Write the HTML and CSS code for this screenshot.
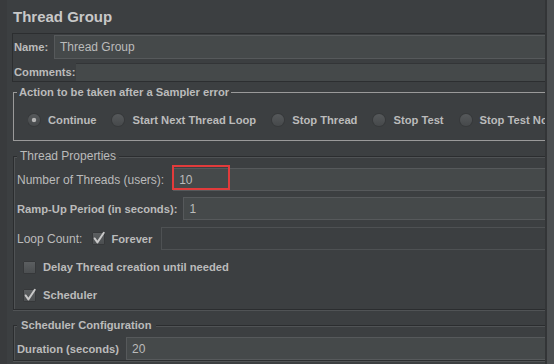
FILE: index.html
```html
<!DOCTYPE html>
<html>
<head>
<meta charset="utf-8">
<title>Thread Group</title>
<link rel="stylesheet" href="styles.css">
</head>
<body>
<div class="frame">
  <div class="edge"></div>
  <main class="content">
    <h1 class="title">Thread Group</h1>

    <div class="name-panel">
      <div class="row name-row">
        <span class="lbl b name-lbl">Name:</span>
        <div class="tf">Thread Group</div>
      </div>
      <div class="row comments-row">
        <span class="lbl b">Comments:</span>
        <div class="tf comments"></div>
      </div>
    </div>

    <fieldset class="group action">
      <legend class="b">Action to be taken after a Sampler error</legend>
      <div class="radios">
        <span class="opt"><span class="radio on"></span><span class="b">Continue</span></span>
        <span class="opt"><span class="radio"></span><span class="b">Start Next Thread Loop</span></span>
        <span class="opt"><span class="radio"></span><span class="b">Stop Thread</span></span>
        <span class="opt"><span class="radio"></span><span class="b">Stop Test</span></span>
        <span class="opt"><span class="radio"></span><span class="b">Stop Test Now</span></span>
      </div>
    </fieldset>

    <fieldset class="group etched props">
      <legend>Thread Properties</legend>
      <div class="row fr fr1">
        <span class="lbl">Number of Threads (users):</span>
        <div class="tf">10<span class="mark"></span></div>
      </div>
      <div class="row fr fr2">
        <span class="lbl b">Ramp-Up Period (in seconds):</span>
        <div class="tf">1</div>
      </div>
      <div class="row fr fr3">
        <span class="lbl">Loop Count:</span>
        <span class="check loop-check">
          <span class="cb"><svg width="13" height="13" viewBox="0 0 13 13"><path d="M2.6 6.4 L5.4 10.4 L11.8 0.8" fill="none" stroke="#c9c9c9" stroke-width="1.9" stroke-linecap="round" stroke-linejoin="round"/></svg></span>
          <span class="b">Forever</span>
        </span>
        <div class="tf disabled"></div>
      </div>
      <div class="row cr cr1">
        <span class="check">
          <span class="cb"></span>
          <span class="b">Delay Thread creation until needed</span>
        </span>
      </div>
      <div class="row cr cr2">
        <span class="check">
          <span class="cb"><svg width="13" height="13" viewBox="0 0 13 13"><path d="M2.6 6.4 L5.4 10.4 L11.8 0.8" fill="none" stroke="#c9c9c9" stroke-width="1.9" stroke-linecap="round" stroke-linejoin="round"/></svg></span>
          <span class="b">Scheduler</span>
        </span>
      </div>
    </fieldset>

    <fieldset class="group etched sched">
      <legend class="b">Scheduler Configuration</legend>
      <div class="row fr dur">
        <span class="lbl b">Duration (seconds)</span>
        <div class="tf">20</div>
      </div>
    </fieldset>
  </main>
  <div class="gutter"></div>
  <div class="scrollbar"></div>
</div>
</body>
</html>
```

FILE: styles.css
```css
* { box-sizing: border-box; }

html, body {
  margin: 0;
  height: 100%;
  overflow: hidden;
}

body {
  background: #3c3f41;
  font-family: "Liberation Sans", Arial, sans-serif;
  font-size: 12px;
  color: #bbbbbb;
}

.frame {
  display: flex;
  height: 364px;
}

.edge {
  flex: none;
  width: 7px;
  background: #393b3d;
}

.content {
  flex: 1;
  min-width: 0;
  overflow: hidden;
}

.gutter {
  flex: none;
  width: 2px;
  background: #333537;
}

.scrollbar {
  flex: none;
  width: 7px;
  background: #4c4f51;
}

.title {
  margin: 0;
  height: 33px;
  line-height: 33px;
  padding-left: 6px;
  font-size: 15px;
  font-weight: bold;
  color: #c8c8c8;
}

.b {
  font-weight: bold;
  font-size: 11.2px;
}

.lbl { white-space: nowrap; flex: none; }

.row {
  display: flex;
  align-items: center;
}

/* Name / comments panel */
.name-panel {
  margin-left: 5px;
  border: 1px solid #2c2e30;
  border-right: 0;
  padding-left: 1px;
}

.name-row {
  margin-top: 1px;
  height: 24px;
}

.name-lbl { width: 40px; }

.comments-row {
  margin-top: 4px;
  height: 18px;
}

/* text fields */
.tf {
  flex: 1;
  min-width: 0;
  height: 100%;
  background: #45494a;
  border: 1px solid #56595b;
  border-right: 0;
  padding-left: 5px;
  display: flex;
  align-items: center;
  position: relative;
  white-space: nowrap;
}

.tf.comments {
  border: 0;
  border-top: 1px solid #333537;
}

.tf.disabled {
  background: transparent;
  border-color: #4e5153;
}

/* annotation box */
.mark {
  position: absolute;
  left: -2px;
  top: -4px;
  width: 58px;
  height: 25px;
  border: 2px solid #e23b3b;
}

/* titled groups */
.group {
  margin: 0 0 0 6px;
  min-width: 0;
  border: 1px solid;
  border-right: 0;
}

.group > legend {
  line-height: 14px;
  padding: 0 3px;
  margin-left: 0;
  white-space: nowrap;
  background: #3c3f41;
}

.group.action {
  margin-top: 3px;
  border-color: #9a9a9a;
  padding: 11px 0 10px 14px;
}

.group.action > legend {
  padding: 0 2px;
  margin-left: -11px;
}

.radios {
  height: 20px;
  display: flex;
  align-items: center;
  gap: 16px;
  white-space: nowrap;
  overflow: hidden;
}

.opt {
  display: flex;
  align-items: center;
  gap: 8px;
  flex: none;
}

.radio {
  flex: none;
  width: 12px;
  height: 12px;
  border-radius: 50%;
  background: linear-gradient(#56595b, #46494b);
  box-shadow: 0 0 0 1px #37393b;
}

.radio.on {
  background: radial-gradient(circle, #b5b5b5 0 1.8px, rgba(181,181,181,0) 2.6px), linear-gradient(#56595b, #46494b);
}

.group.etched {
  border-color: #2b2d2f;
  box-shadow: inset 1px 1px 0 #505355, 0 1px 0 #505355;
}

.group.props {
  margin-top: 8px;
  padding: 5px 0 4px 3px;
}

.fr { height: 23px; }
.fr1 { gap: 9px; }
.fr2 { gap: 6px; margin-top: 6px; }
.fr3 { margin-top: 7px; }

.check {
  display: flex;
  align-items: center;
  gap: 7px;
  white-space: nowrap;
}

.loop-check {
  margin-left: 10px;
  gap: 6px;
  margin-right: 9px;
}

.cb {
  flex: none;
  width: 13px;
  height: 13px;
  border-radius: 1px;
  background: linear-gradient(#5d6062, #4a4d4f);
  box-shadow: inset 0 0 0 1px #36383a;
}

.cb svg {
  display: block;
  overflow: visible;
}

.cr { height: 20px; padding-left: 6px; }
.cr1 { margin-top: 7px; }
.cr2 { margin-top: 8px; }

.group.sched {
  margin-top: 8px;
  padding: 5px 0 0 3px;
}

.group.sched > legend { padding: 0 4px; }

.dur { gap: 7px; }
```
